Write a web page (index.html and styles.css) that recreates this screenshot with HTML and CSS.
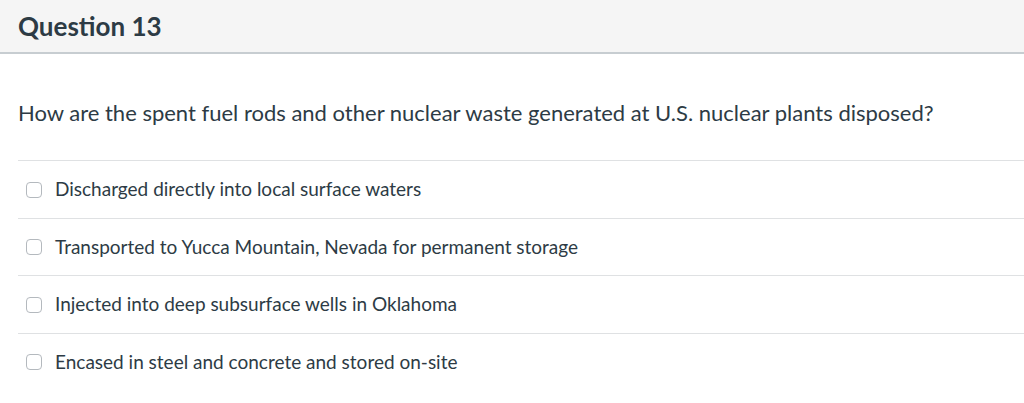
FILE: index.html
```html
<!DOCTYPE html>
<html>
<head>
<meta charset="utf-8">
<link rel="stylesheet" href="styles.css">
</head>
<body>
<div class="question">
  <div class="q-header"><h2 class="q-title">Question 13</h2></div>
  <div class="q-body">
    <p class="q-text">How are the spent fuel rods and other nuclear waste generated at U.S. nuclear plants disposed?</p>
    <div class="answers">
      <label class="answer"><span class="box"></span><span class="a-text">Discharged directly into local surface waters</span></label>
      <label class="answer"><span class="box"></span><span class="a-text">Transported to Yucca Mountain, Nevada for permanent storage</span></label>
      <label class="answer"><span class="box"></span><span class="a-text">Injected into deep subsurface wells in Oklahoma</span></label>
      <label class="answer"><span class="box"></span><span class="a-text">Encased in steel and concrete and stored on-site</span></label>
    </div>
  </div>
</div>
</body>
</html>
```
FILE: styles.css
```css
html, body {
  margin: 0;
  padding: 0;
  background: #fff;
}
body {
  font-family: Lato, "Liberation Sans", sans-serif;
  color: #2d3b45;
}
.q-header {
  background: #f5f5f5;
  height: 52px;
  border-bottom: 2px solid #c7cdd1;
  display: flex;
  align-items: center;
  padding-left: 18px;
}
.q-title {
  margin: 0;
  font-size: 26px;
  font-weight: 700;
  line-height: 1;
}
.q-body {
  padding-left: 18px;
}
.q-text {
  margin: 0;
  padding-top: 46px;
  font-size: 22px;
  line-height: 26px;
  height: 60px;
}
.answers {
  display: flex;
  flex-direction: column;
}
.answer {
  display: flex;
  align-items: center;
  height: 57.5px;
  border-top: 1px solid #dfe1e3;
  box-sizing: border-box;
  padding-left: 8px;
  padding-bottom: 1px;
}
.box {
  width: 14px;
  height: 14px;
  border: 1px solid #b4b9be;
  border-radius: 4px;
  background: #fff;
  flex: none;
  margin-right: 13px;
  margin-top: 2px;
}
.a-text {
  font-size: 19px;
}
```
